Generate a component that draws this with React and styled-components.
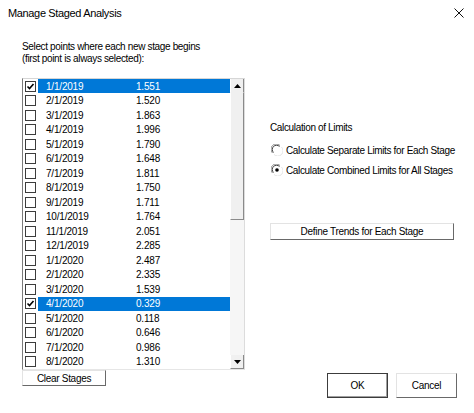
import React from 'react';
import styled, { createGlobalStyle } from 'styled-components';

const GlobalStyle = createGlobalStyle`
  html, body {
    margin: 0;
    padding: 0;
    background: #ffffff;
  }
  body {
    font-family: "Liberation Sans", Arial, sans-serif;
    color: #000;
  }
`

const Window = styled.div`
  width: 474px;
  height: 413px;
  background: #ffffff;
  display: flex;
  flex-direction: column;
  overflow: hidden;
`
const TitleBar = styled.div`
  height: 26px;
  display: flex;
  align-items: center;
  justify-content: space-between;
  padding: 0 10px 0 8px;
  font-size: 11px;
  letter-spacing: -0.35px;
`
const Body = styled.div`
  display: grid;
  grid-template-columns: 224px minmax(0, 1fr);
  column-gap: 24px;
  align-items: start;
  padding: 0 17px 0 22px;
  font-size: 10px;
  letter-spacing: -0.35px;
`
const LeftCol = styled.div`
  display: flex;
  flex-direction: column;
`
const Prompt = styled.div`
  margin-top: 15px;
  line-height: 12px;
`
const ListBox = styled.div`
  margin-top: 13px;
  width: 223px;
  height: 292px;
  box-sizing: border-box;
  display: flex;
  border-left: 1px solid #7a7a7a;
  border-top: 1px solid #d6d6d6;
  border-right: 1px solid #dcdcdc;
  border-bottom: 1px solid #e6e6e6;
`
const Rows = styled.div`
  flex: 1;
  display: flex;
  flex-direction: column;
`
const Row = styled.div`
  height: 14.5px;
  display: flex;
  align-items: center;
  padding-left: 2px;
  gap: 2px;
  letter-spacing: -0.2px;
`
const Check = styled.span`
  width: 11px;
  height: 11px;
  box-sizing: border-box;
  border: 1px solid #3c3c3c;
  background: #fff;
  display: flex;
  align-items: center;
  justify-content: center;
  flex: none;
`
const Cell = styled.div`
  flex: 1;
  height: 14px;
  display: flex;
  align-items: center;
  padding-left: 8px;
  background: ${p => (p.$selected ? '#0078d7' : 'transparent')};
  color: ${p => (p.$selected ? '#ffffff' : '#000000')};
`
const DateText = styled.span`
  width: 90px;
`
const Scrollbar = styled.div`
  width: 14px;
  display: flex;
  flex-direction: column;
  background: #f0f0f0;
`
const ArrowButton = styled.div`
  height: 14px;
  flex: none;
  display: flex;
  align-items: center;
  justify-content: center;
  background: #f0f0f0;
  box-sizing: border-box;
  border-right: 1px solid #8a8a8a;
  border-bottom: 1px solid ${p => (p.$down ? '#8a8a8a' : '#f0f0f0')};
  border-left: 1px solid #ffffff;
`
const Thumb = styled.div`
  height: 127px;
  flex: none;
  box-sizing: border-box;
  background: #f0f0f0;
  border-left: 1px solid #ffffff;
  border-right: 1px solid #8a8a8a;
  border-bottom: 1px solid #8a8a8a;
`
const Track = styled.div`
  flex: 1;
  background: #f6f6f6;
`
const Button = styled.button`
  font-family: "Liberation Sans", Arial, sans-serif;
  font-size: 10px;
  letter-spacing: -0.3px;
  color: #000;
  background: #ffffff;
  padding: 0;
  box-sizing: border-box;
  width: ${p => p.$w}px;
  height: ${p => p.$h}px;
  margin-top: ${p => p.$mt || 0}px;
  border-top: 1px solid #e3e3e3;
  border-left: 1px solid #e3e3e3;
  border-right: 1px solid #696969;
  border-bottom: 1px solid #696969;
  cursor: pointer;
`
const DefaultButton = styled(Button)`
  border: 1px solid #3c3c3c;
  box-shadow: inset -1px -1px 0 #a0a0a0;
`
const RightCol = styled.div`
  display: flex;
  flex-direction: column;
`
const Heading = styled.div`
  margin-top: 96px;
  line-height: 12px;
`
const RadioGroup = styled.div`
  margin-top: 6px;
  display: flex;
  flex-direction: column;
`
const RadioRow = styled.label`
  height: 20px;
  display: flex;
  align-items: center;
  gap: 3px;
  padding-left: 1px;
  white-space: nowrap;
`
const Footer = styled.div`
  margin-top: 133px;
  display: flex;
  justify-content: flex-end;
  gap: 8px;
`

const data = [
  ['1/1/2019', '1.551', true],
  ['2/1/2019', '1.520'],
  ['3/1/2019', '1.863'],
  ['4/1/2019', '1.996'],
  ['5/1/2019', '1.790'],
  ['6/1/2019', '1.648'],
  ['7/1/2019', '1.811'],
  ['8/1/2019', '1.750'],
  ['9/1/2019', '1.711'],
  ['10/1/2019', '1.764'],
  ['11/1/2019', '2.051'],
  ['12/1/2019', '2.285'],
  ['1/1/2020', '2.487'],
  ['2/1/2020', '2.335'],
  ['3/1/2020', '1.539'],
  ['4/1/2020', '0.329', true],
  ['5/1/2020', '0.118'],
  ['6/1/2020', '0.646'],
  ['7/1/2020', '0.986'],
  ['8/1/2020', '1.310'],
]

const Tick = () => (
  <svg width="9" height="9" viewBox="0 0 9 9">
    <path d="M1.5 4.5 L3.5 6.5 L7.5 2" fill="none" stroke="#000" strokeWidth="1.6" />
  </svg>
)

const Radio = ({ on }) => (
  <svg width="12" height="12" viewBox="0 0 12 12">
    <circle cx="6" cy="6" r="5.5" fill="#fff" />
    <path d="M1.5 9 A5 5 0 0 1 9 1.5" fill="none" stroke="#8a8a8a" strokeWidth="1" />
    <path d="M2.5 8.5 A4 4 0 0 1 8.5 2.5" fill="none" stroke="#404040" strokeWidth="1" />
    <path d="M10.5 3 A5 5 0 0 1 3 10.5" fill="none" stroke="#e3e3e3" strokeWidth="1" />
    {on && <circle cx="6" cy="6" r="1.8" fill="#000" />}
  </svg>
)

const Arrow = ({ down }) => (
  <svg width="7" height="4" viewBox="0 0 7 4">
    <path d={down ? 'M0 0 H7 L3.5 4 Z' : 'M0 4 H7 L3.5 0 Z'} fill="#000" />
  </svg>
)

const Close = () => (
  <svg width="10" height="10" viewBox="0 0 10 10">
    <path d="M0.5 0.5 L9.5 9.5 M9.5 0.5 L0.5 9.5" stroke="#111" strokeWidth="1" />
  </svg>
)

export default function App() {
  return (
    <Window>
      <GlobalStyle />
      <TitleBar>
        <span>Manage Staged Analysis</span>
        <Close />
      </TitleBar>
      <Body>
        <LeftCol>
          <Prompt>
            Select points where each new stage begins
            <br />
            (first point is always selected):
          </Prompt>
          <ListBox>
            <Rows>
              {data.map(([d, v, sel]) => (
                <Row key={d}>
                  <Check>{sel && <Tick />}</Check>
                  <Cell $selected={sel}>
                    <DateText>{d}</DateText>
                    <span>{v}</span>
                  </Cell>
                </Row>
              ))}
            </Rows>
            <Scrollbar>
              <ArrowButton>
                <Arrow />
              </ArrowButton>
              <Thumb />
              <Track />
              <ArrowButton $down>
                <Arrow down />
              </ArrowButton>
            </Scrollbar>
          </ListBox>
          <Button $w={84} $h={16}>Clear Stages</Button>
        </LeftCol>
        <RightCol>
          <Heading>Calculation of Limits</Heading>
          <RadioGroup>
            <RadioRow>
              <Radio />
              Calculate Separate Limits for Each Stage
            </RadioRow>
            <RadioRow>
              <Radio on />
              Calculate Combined Limits for All Stages
            </RadioRow>
          </RadioGroup>
          <Button $w={184} $h={17} $mt={43}>
            Define Trends for Each Stage
          </Button>
          <Footer>
            <DefaultButton $w={61} $h={25}>OK</DefaultButton>
            <Button $w={61} $h={25}>Cancel</Button>
          </Footer>
        </RightCol>
      </Body>
    </Window>
  )
}
